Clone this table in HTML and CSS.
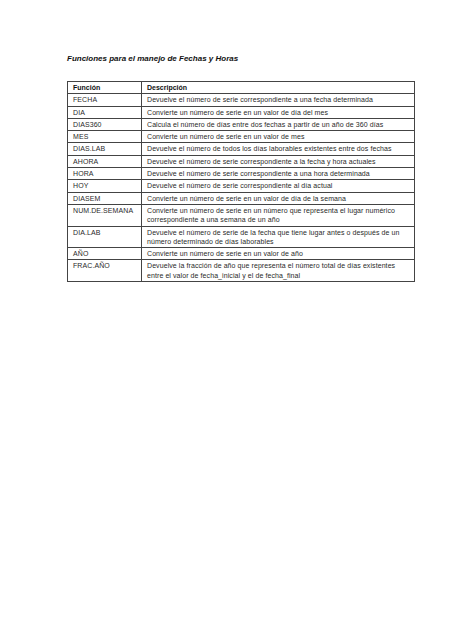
FILE: index.html
```html
<!DOCTYPE html>
<html lang="es">
<head>
<meta charset="utf-8">
<link rel="stylesheet" href="styles.css">
</head>
<body>
<div class="page">
  <h1 class="title">Funciones para el manejo de Fechas y Horas</h1>
  <table class="fn-table">
    <thead>
      <tr><th class="col-fn">Función</th><th>Descripción</th></tr>
    </thead>
    <tbody>
      <tr><td>FECHA</td><td>Devuelve el número de serie correspondiente a una fecha determinada</td></tr>
      <tr><td>DIA</td><td>Convierte un número de serie en un valor de día del mes</td></tr>
      <tr><td>DIAS360</td><td>Calcula el número de días entre dos fechas a partir de un año de 360 días</td></tr>
      <tr><td>MES</td><td>Convierte un número de serie en un valor de mes</td></tr>
      <tr><td>DIAS.LAB</td><td>Devuelve el número de todos los días laborables existentes entre dos fechas</td></tr>
      <tr><td>AHORA</td><td>Devuelve el número de serie correspondiente a la fecha y hora actuales</td></tr>
      <tr><td>HORA</td><td>Devuelve el número de serie correspondiente a una hora determinada</td></tr>
      <tr><td>HOY</td><td>Devuelve el número de serie correspondiente al día actual</td></tr>
      <tr><td>DIASEM</td><td>Convierte un número de serie en un valor de día de la semana</td></tr>
      <tr><td>NUM.DE.SEMANA</td><td>Convierte un número de serie en un número que representa el lugar numérico<br>correspondiente a una semana de un año</td></tr>
      <tr><td>DIA.LAB</td><td>Devuelve el número de serie de la fecha que tiene lugar antes o después de un<br>número determinado de días laborables</td></tr>
      <tr><td>AÑO</td><td>Convierte un número de serie en un valor de año</td></tr>
      <tr><td>FRAC.AÑO</td><td>Devuelve la fracción de año que representa el número total de días existentes<br>entre el valor de fecha_inicial y el de fecha_final</td></tr>
    </tbody>
  </table>
</div>
</body>
</html>
```
FILE: styles.css
```css
html, body {
  margin: 0;
  padding: 0;
  background: #ffffff;
}
.page {
  padding: 53px 0 0 67px;
  font-family: "Liberation Sans", Arial, sans-serif;
  color: #1a1a1a;
}
.title {
  margin: 0 0 16px 0;
  font-size: 8px;
  line-height: 12px;
  font-weight: bold;
  font-style: italic;
  color: #111;
}
.fn-table {
  border-collapse: collapse;
  width: 348px;
  font-size: 7px;
  line-height: 9.3px;
  border: 1px solid #444;
  border-right: 1.5px solid #555;
  border-bottom: 1.5px solid #555;
}
.fn-table th,
.fn-table td {
  border: 1px solid #444;
  padding: 1px 4px 1px 5px;
  text-align: left;
  vertical-align: top;
  white-space: nowrap;
}
.fn-table th {
  font-weight: bold;
  color: #111;
}
.fn-table td {
  color: #2a2a2a;
  letter-spacing: 0.08px;
}
.col-fn {
  width: 64px;
}
```
